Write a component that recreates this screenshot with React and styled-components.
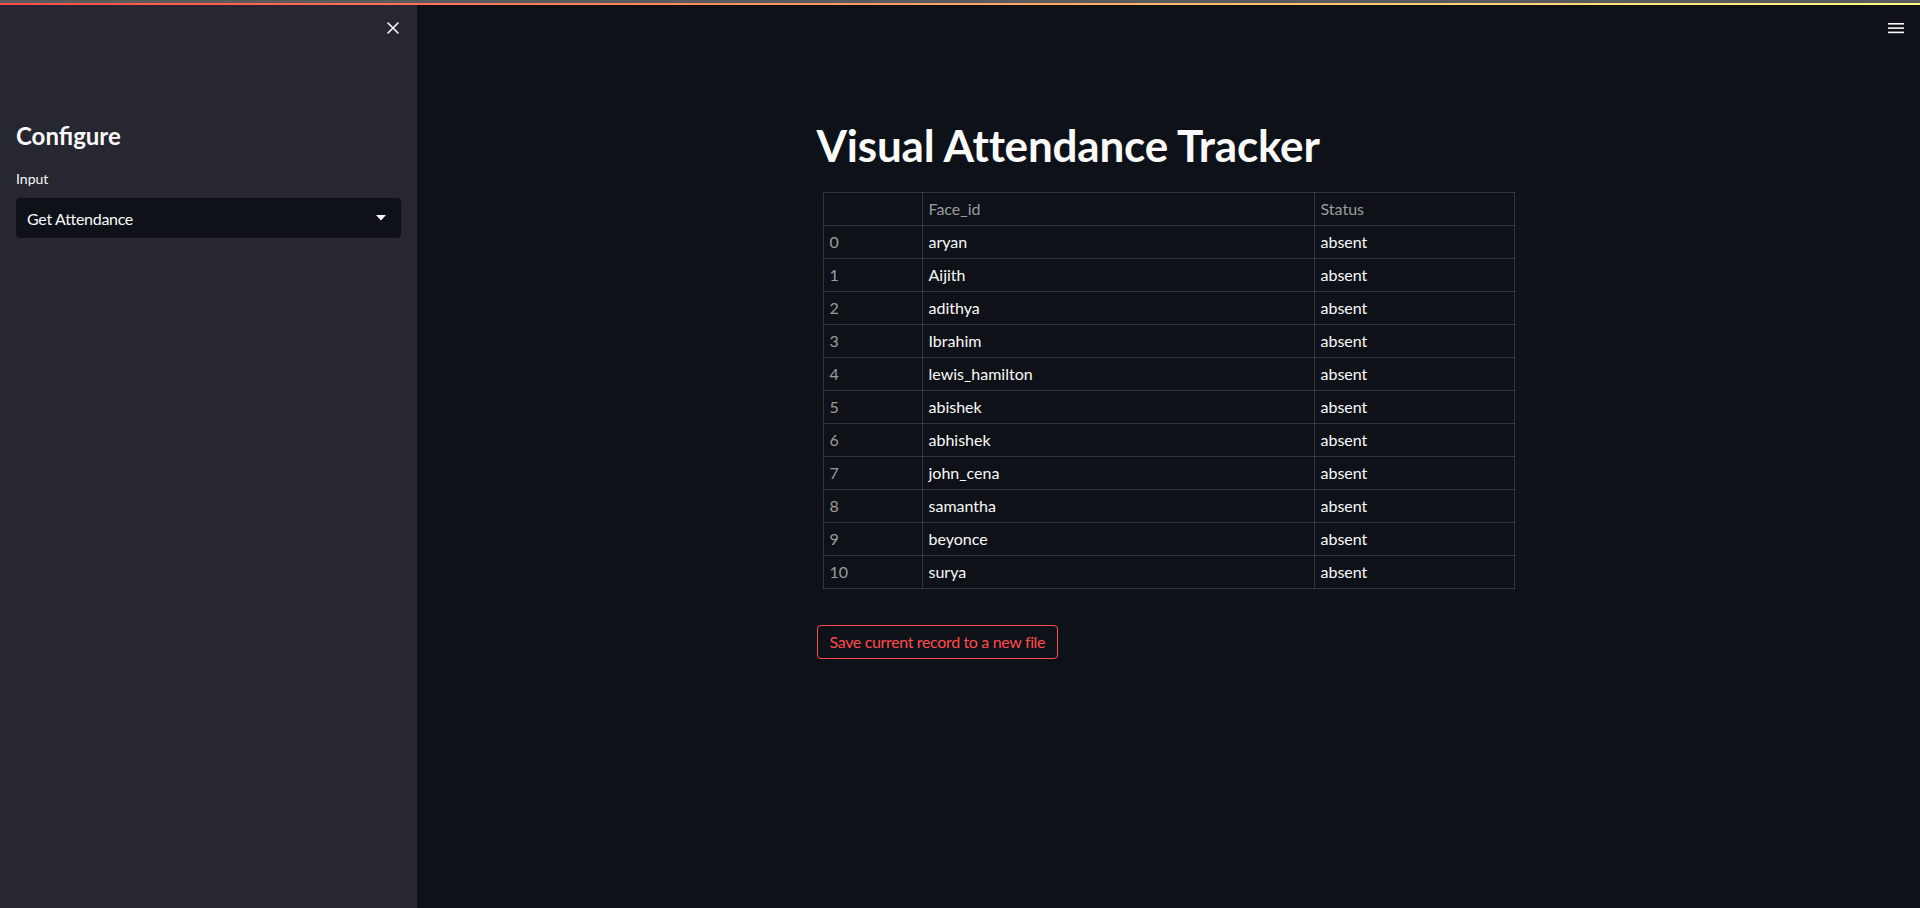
import React from "react";
import styled, { createGlobalStyle } from "styled-components";

const GlobalStyle = createGlobalStyle`
  html, body {
    margin: 0;
    padding: 0;
    background: #0e1117;
    font-family: "Lato", "Noto Sans", sans-serif;
    color: #fafafa;
  }
  * { box-sizing: border-box; }
`;

const rows = [
  "aryan",
  "Aijith",
  "adithya",
  "Ibrahim",
  "lewis_hamilton",
  "abishek",
  "abhishek",
  "john_cena",
  "samantha",
  "beyonce",
  "surya",
];

export default function App() {
  return (
    <>
      <GlobalStyle />
      <Page>
        <Decoration />
        <Body>
          <Sidebar>
            <SidebarTop>
              <IconBtn aria-label="close">
                <svg width="14" height="14" viewBox="0 0 14 14">
                  <path d="M2 2 L12 12 M12 2 L2 12" stroke="#fafafa" strokeWidth="1.6" strokeLinecap="round" />
                </svg>
              </IconBtn>
            </SidebarTop>
            <SidebarContent>
              <SideTitle>Configure</SideTitle>
              <Label>Input</Label>
              <Select>
                <span>Get Attendance</span>
                <svg width="10" height="6" viewBox="0 0 10 6">
                  <path d="M0 0 L10 0 L5 5.5 Z" fill="#fafafa" />
                </svg>
              </Select>
            </SidebarContent>
          </Sidebar>
          <Main>
            <MainTop>
              <IconBtn aria-label="menu">
                <svg width="16" height="12" viewBox="0 0 16 12">
                  <rect x="0" y="1" width="16" height="1.6" fill="#fafafa" />
                  <rect x="0" y="5.3" width="16" height="1.6" fill="#fafafa" />
                  <rect x="0" y="9.6" width="16" height="1.6" fill="#fafafa" />
                </svg>
              </IconBtn>
            </MainTop>
            <Block>
              <Title>Visual Attendance Tracker</Title>
              <TableWrap>
                <Table>
                  <thead>
                    <tr>
                      <Th $w={99} />
                      <Th $w={392}>Face_id</Th>
                      <Th>Status</Th>
                    </tr>
                  </thead>
                  <tbody>
                    {rows.map((name, i) => (
                      <tr key={i}>
                        <Td $muted>{i}</Td>
                        <Td>{name}</Td>
                        <Td>absent</Td>
                      </tr>
                    ))}
                  </tbody>
                </Table>
              </TableWrap>
              <SaveButton>Save current record to a new file</SaveButton>
            </Block>
          </Main>
        </Body>
      </Page>
    </>
  );
}

const Page = styled.div`
  display: flex;
  flex-direction: column;
  height: 100vh;
  overflow: hidden;
`;

const Decoration = styled.div`
  height: 5px;
  flex-shrink: 0;
  border-top: 3px solid #5a5a5c;
  background: linear-gradient(90deg, #ff4b4b, #fffd80);
`;

const Body = styled.div`
  flex: 1;
  display: flex;
  min-height: 0;
`;

const Sidebar = styled.aside`
  width: 417px;
  flex-shrink: 0;
  background: #262730;
  display: flex;
  flex-direction: column;
`;

const SidebarTop = styled.div`
  display: flex;
  justify-content: flex-end;
  padding: 7px 8px 0 0;
`;

const IconBtn = styled.button`
  width: 32px;
  height: 32px;
  display: flex;
  align-items: center;
  justify-content: center;
  background: transparent;
  border: none;
  padding: 0;
  cursor: pointer;
`;

const SidebarContent = styled.div`
  padding: 0 16px;
  display: flex;
  flex-direction: column;
`;

const SideTitle = styled.h2`
  margin: 78px 0 0;
  font-size: 24px;
  font-weight: 700;
  line-height: 1.2;
`;

const Label = styled.div`
  margin-top: 18px;
  font-size: 14px;
  line-height: 1.4;
`;

const Select = styled.div`
  margin-top: 10px;
  height: 40px;
  background: #0e1117;
  border-radius: 4px;
  display: flex;
  align-items: center;
  justify-content: space-between;
  padding: 0 15px 0 11px;
  font-size: 16px;
  letter-spacing: -0.3px;
`;

const Main = styled.main`
  flex: 1;
  display: flex;
  flex-direction: column;
  min-width: 0;
`;

const MainTop = styled.div`
  display: flex;
  justify-content: flex-end;
  padding: 7px 8px 0 0;
`;

const Block = styled.div`
  width: 736px;
  margin: 0 auto;
  padding: 75px 16px 0;
  display: flex;
  flex-direction: column;
  align-items: flex-start;
`;

const Title = styled.h1`
  margin: 0;
  font-size: 44px;
  font-weight: 700;
  line-height: 1.2;
  letter-spacing: -0.2px;
`;

const TableWrap = styled.div`
  margin-top: 20px;
  padding: 0 6px;
  width: 100%;
`;

const Table = styled.table`
  width: 100%;
  border-collapse: collapse;
  font-size: 16px;
  tr {
    height: 33px;
  }
`;

const Th = styled.th`
  text-align: left;
  font-weight: 400;
  color: rgba(250, 250, 250, 0.6);
  border: 1px solid rgba(250, 250, 250, 0.15);
  padding: 0 6px;
  width: ${(p) => (p.$w ? `${p.$w}px` : "auto")};
`;

const Td = styled.td`
  border: 1px solid rgba(250, 250, 250, 0.15);
  padding: 0 6px;
  color: ${(p) => (p.$muted ? "rgba(250, 250, 250, 0.6)" : "#fafafa")};
`;

const SaveButton = styled.button`
  margin-top: 36px;
  height: 34px;
  padding: 0 12px;
  border: 1px solid #ff4b4b;
  border-radius: 4px;
  background: #0e1117;
  color: #ff4b4b;
  font-family: inherit;
  font-size: 16px;
  letter-spacing: -0.35px;
  cursor: pointer;
`;
